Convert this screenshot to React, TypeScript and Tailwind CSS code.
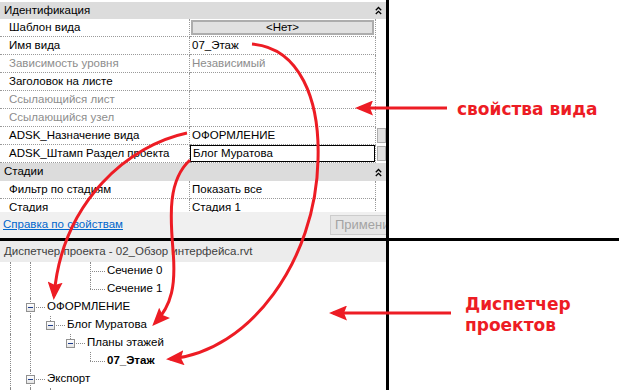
import React from 'react';

const RED = '#ed1c24';

type PropRow = {
  label: string;
  value?: string;
  dim?: boolean;
  kind?: 'button' | 'edit';
  side?: boolean;
};

const identity: PropRow[] = [
  { label: 'Шаблон вида', value: '<Нет>', kind: 'button' },
  { label: 'Имя вида', value: '07_Этаж' },
  { label: 'Зависимость уровня', value: 'Независимый', dim: true },
  { label: 'Заголовок на листе' },
  { label: 'Ссылающийся лист', dim: true },
  { label: 'Ссылающийся узел', dim: true },
  { label: 'ADSK_Назначение вида', value: 'ОФОРМЛЕНИЕ', side: true },
  { label: 'ADSK_Штамп Раздел проекта', value: 'Блог Муратова', kind: 'edit', side: true },
];

const stages: PropRow[] = [
  { label: 'Фильтр по стадиям', value: 'Показать все' },
  { label: 'Стадия', value: 'Стадия 1' },
];

type TreeNode = {
  label: string;
  guides: boolean[]; // vertical lines of ancestor levels
  last: boolean; // no sibling below
  box?: boolean; // expanded [-] box
  bold?: boolean;
};

// visible part of the project browser (scrolled)
const tree: TreeNode[] = [
  { label: 'Сечение 0', guides: [true, true, false, false], last: false },
  { label: 'Сечение 1', guides: [true, true, false, false], last: true },
  { label: 'ОФОРМЛЕНИЕ', guides: [true], last: false, box: true },
  { label: 'Блог Муратова', guides: [true, true], last: true, box: true },
  { label: 'Планы этажей', guides: [true, true, false], last: true, box: true },
  { label: '07_Этаж', guides: [true, true, false, false], last: true, bold: true },
  { label: 'Экспорт', guides: [true], last: false, box: true },
  { label: '', guides: [true, true], last: false },
];

function Chevrons() {
  return (
    <svg width="7" height="9" viewBox="0 0 7 9" className="block">
      <polyline points="0.8,4.2 3.5,1.5 6.2,4.2" fill="none" stroke="#000" strokeWidth="1.3" />
      <polyline points="0.8,8 3.5,5.3 6.2,8" fill="none" stroke="#000" strokeWidth="1.3" />
    </svg>
  );
}

function GroupHeader({ title, tall }: { title: string; tall?: boolean }) {
  return (
    <div
      className={`flex shrink-0 items-center justify-between bg-[#dcdcdc] pl-[4px] pr-[4px] ${
        tall ? 'h-[18px]' : 'h-[17px]'
      }`}
    >
      <span>{title}</span>
      <Chevrons />
    </div>
  );
}

function PropLine({ row }: { row: PropRow }) {
  return (
    <div className="flex h-[18px] shrink-0">
      <div
        className={`flex w-[190px] shrink-0 items-center whitespace-nowrap border-r border-b border-dotted border-[#9a9a9a] pl-[9px] ${
          row.dim ? 'text-[#8d8d8d]' : 'text-black'
        }`}
      >
        {row.label}
      </div>
      <div
        className={`flex w-[186px] shrink-0 items-center border-r border-b border-dotted border-[#9a9a9a] ${
          row.dim ? 'text-[#8d8d8d]' : 'text-black'
        }`}
      >
        {row.kind === 'button' ? (
          <div className="mx-[1px] flex h-[15px] flex-1 items-center justify-center border-2 border-[#adadad] bg-[#e1e1e1]">
            {row.value}
          </div>
        ) : row.kind === 'edit' ? (
          <div className="flex h-full flex-1 items-center border border-black pl-[2px]">{row.value}</div>
        ) : (
          <span className="pl-[2px]">{row.value}</span>
        )}
      </div>
      <div className="w-[10px] shrink-0 pl-[1px] pt-[1px]">
        {row.side && <div className="h-[15px] w-[9px] border border-[#adadad] bg-[#e1e1e1]" />}
      </div>
    </div>
  );
}

function MinusBox() {
  return (
    <div className="absolute left-[6px] top-[5px] flex h-[9px] w-[9px] items-center justify-center border border-[#919191] bg-gradient-to-b from-white to-[#e4e4e4]">
      <div className="h-[1px] w-[5px] bg-[#1d3c8c]" />
    </div>
  );
}

function TreeRow({ n }: { n: TreeNode }) {
  return (
    <div className="flex h-[18px] shrink-0 items-stretch">
      {n.guides.map((g, i) => (
        <div key={i} className="relative w-[20px] shrink-0">
          {g && <div className="absolute left-[10px] top-0 h-full border-l border-dotted border-[#8a8a8a]" />}
        </div>
      ))}
      <div className="relative w-[20px] shrink-0">
        <div
          className={`absolute left-[10px] top-0 border-l border-dotted border-[#8a8a8a] ${
            n.last ? 'h-[9px]' : 'h-full'
          }`}
        />
        {n.label && <div className="absolute left-[10px] top-[9px] w-[15px] border-t border-dotted border-[#8a8a8a]" />}
        {n.box && <MinusBox />}
      </div>
      {n.label && (
        <span className={`flex items-center whitespace-nowrap pl-[7px] ${n.bold ? 'font-bold' : ''}`}>{n.label}</span>
      )}
    </div>
  );
}

export default function App() {
  return (
    <div className="relative h-[390px] w-[619px] overflow-hidden bg-white font-['Liberation_Sans',Arial,sans-serif] text-[11.5px] text-black">
      {/* properties */}
      <div className="flex h-[238px]">
        <div className="flex w-[386px] shrink-0 flex-col overflow-hidden">
          <div className="flex h-[212px] shrink-0 flex-col overflow-hidden pt-[2px]">
            <GroupHeader title="Идентификация" />
            {identity.map(r => (
              <PropLine key={r.label} row={r} />
            ))}
            <GroupHeader title="Стадии" tall />
            {stages.map(r => (
              <PropLine key={r.label} row={r} />
            ))}
          </div>
          <div className="flex h-[26px] items-center bg-[#f0f0f0] pl-[3px]">
            <span className="text-[#0066cc] underline">Справка по свойствам</span>
            <div className="ml-auto mr-[-8px] flex h-[20px] w-[64px] shrink-0 items-center border border-[#cccccc] bg-[#e5e5e5] pl-[4px] text-[13px] text-[#a3a3a3]">
              Применить
            </div>
          </div>
        </div>
        <div className="w-[3px] shrink-0 bg-black" />
        <div className="flex-1 pl-[68px] pt-[99px]">
          <div className="font-['DejaVu_Sans',sans-serif] text-[17px] font-bold leading-[20px] text-[#ed1c24]">
            свойства вида
          </div>
        </div>
      </div>

      <div className="h-[3px] bg-black" />

      {/* project browser */}
      <div className="flex h-[149px]">
        <div className="flex w-[386px] shrink-0 flex-col overflow-hidden">
          <div className="flex h-[21px] shrink-0 items-center bg-[#ececec] pl-[4px] text-[#404040] whitespace-nowrap">
            Диспетчер проекта - 02_Обзор интерфейса.rvt
          </div>
          <div className="flex flex-1 flex-col overflow-hidden">
            {tree.map((n, i) => (
              <TreeRow key={i} n={n} />
            ))}
          </div>
        </div>
        <div className="w-[3px] shrink-0 bg-black" />
        <div className="flex-1 pl-[76px] pt-[53px]">
          <div className="font-['DejaVu_Sans',sans-serif] text-[17px] font-bold leading-[21px] text-[#ed1c24]">
            <div>Диспетчер</div>
            <div>проектов</div>
          </div>
        </div>
      </div>

      {/* red annotation arrows */}
      <svg className="pointer-events-none absolute left-0 top-0" width="619" height="390" viewBox="0 0 619 390">
        <defs>
          <marker
            id="head"
            markerUnits="userSpaceOnUse"
            markerWidth="18"
            markerHeight="15"
            viewBox="0 0 18 15"
            refX="14"
            refY="7.5"
            orient="auto"
          >
            <path d="M0 0 L18 7.5 L0 15 L3 7.5 Z" fill={RED} />
          </marker>
        </defs>
        <path d="M252 44 C300 48 320 100 318 160 C316 260 250 352 170 359" fill="none" stroke={RED} strokeWidth="3" markerEnd="url(#head)" />
        <path d="M187 133 C130 145 62 200 54 296" fill="none" stroke={RED} strokeWidth="3" markerEnd="url(#head)" />
        <path d="M190 160 C168 180 170 215 173 250 C176 285 172 305 155 323" fill="none" stroke={RED} strokeWidth="3" markerEnd="url(#head)" />
        <path d="M447 108 L359 108" fill="none" stroke={RED} strokeWidth="3" markerEnd="url(#head)" />
        <path d="M451 313 L333 313" fill="none" stroke={RED} strokeWidth="3" markerEnd="url(#head)" />
      </svg>
    </div>
  );
}
